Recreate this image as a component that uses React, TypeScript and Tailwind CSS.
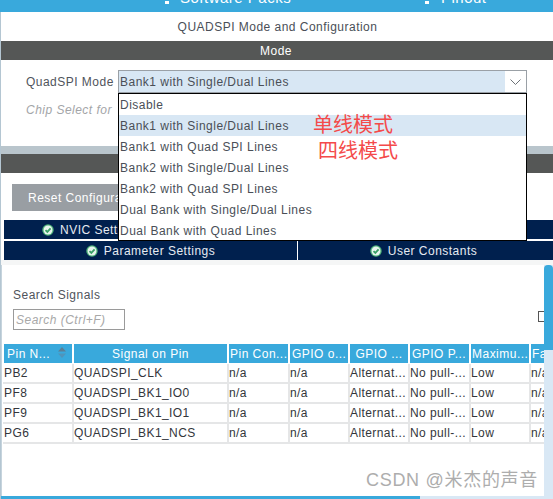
import React from "react";

const Check = () => (
  <svg width="12" height="12" viewBox="0 0 13 13" className="shrink-0">
    <circle cx="6.5" cy="6.5" r="6.2" fill="#4fb37a" />
    <circle cx="6.5" cy="6.5" r="4.8" fill="#e8f5ee" />
    <path d="M3.8 6.6 L5.8 8.6 L9.3 4.8" fill="none" stroke="#3aa066" strokeWidth="2" />
  </svg>
);

const columns = [
  { w: "w-[68px]", label: "Pin N...", align: "pl-[3px]", sort: true },
  { w: "w-[153px]", label: "Signal on Pin", align: "justify-center" },
  { w: "w-[59px]", label: "Pin Con...", align: "pl-[1px]" },
  { w: "w-[58px]", label: "GPIO o...", align: "pl-[2px]" },
  { w: "w-[58px]", label: "GPIO ...", align: "justify-center" },
  { w: "w-[59px]", label: "GPIO P...", align: "pl-[2px]" },
  { w: "w-[58px]", label: "Maximu...", align: "pl-[1px]" },
  { w: "w-[20px]", label: "Fa", align: "pl-[1px]" },
];

const rows = [
  ["PB2", "QUADSPI_CLK"],
  ["PF8", "QUADSPI_BK1_IO0"],
  ["PF9", "QUADSPI_BK1_IO1"],
  ["PG6", "QUADSPI_BK1_NCS"],
];

const options = [
  "Disable",
  "Bank1 with Single/Dual Lines",
  "Bank1 with Quad SPI Lines",
  "Bank2 with Single/Dual Lines",
  "Bank2 with Quad SPI Lines",
  "Dual Bank with Single/Dual Lines",
  "Dual Bank with Quad Lines",
];

export default function App() {
  return (
    <div className="relative w-[553px] h-[499px] overflow-hidden bg-white font-['Liberation_Sans',Arial,sans-serif] text-[12px] tracking-[0.48px] text-[#4a4f57]">
      {/* top bar */}
      <div className="h-[12px] bg-[#39a9dc] relative overflow-hidden text-white text-[15px] tracking-[0.5px]">
        <span className="absolute left-[180px] top-[-13px] whitespace-nowrap">Software Packs</span>
        <span className="absolute left-[165px] top-[1px] w-[4px] h-[3px] bg-white" />
        <span className="absolute left-[441px] top-[-13px] whitespace-nowrap">Pinout</span>
        <span className="absolute left-[425px] top-[1px] w-[4px] h-[3px] bg-white" />
      </div>

      <div className="border-l border-[#b4c6d2] h-[487px] flex flex-col">
        <div className="h-[29px] flex items-center justify-center pt-[1px] pl-[1px] shrink-0">QUADSPI Mode and Configuration</div>
        <div className="h-[19px] bg-[#555756] text-white flex items-center justify-center pr-[2px] shrink-0">Mode</div>

        <div className="h-[10px] shrink-0" />
        <div className="flex items-center h-[23px] shrink-0">
          <div className="w-[117px] pl-[25px] whitespace-nowrap text-[#50545c]">QuadSPI Mode</div>
          <div className="w-[409px] h-[23px] border border-[#9aa0a6] bg-[#d8e7f4] flex items-center justify-between">
            <span className="pl-[1px]">Bank1 with Single/Dual Lines</span>
            <span className="w-[21px] h-full bg-white flex items-center justify-center">
              <svg width="11" height="6" viewBox="0 0 11 6">
                <path d="M0.5 0.5 L5.5 5.5 L10.5 0.5" fill="none" stroke="#6d7277" strokeWidth="1" />
              </svg>
            </span>
          </div>
        </div>
        <div className="h-[16px] mt-[8px] pl-[25px] italic text-[#a3a5a8] whitespace-nowrap shrink-0">Chip Select for</div>

        <div className="h-[8px] mt-[29px] bg-[#b9c5cc] shrink-0" />
        <div className="h-[19px] bg-[#555756] shrink-0" />

        <div className="mt-[11px] ml-[11px] w-[160px] h-[27px] bg-[#999ea3] text-white flex items-center pl-[16px] whitespace-nowrap shrink-0">
          Reset Configuration
        </div>

        <div className="mt-[9px] ml-[3px] h-[19px] bg-[#00204e] text-[#e6ebf2] flex items-center shrink-0">
          <div className="pl-[38px] flex items-center gap-[6px]">
            <Check />
            <span>NVIC Settings</span>
          </div>
        </div>
        <div className="mt-[2px] ml-[3px] h-[19px] bg-[#00204e] text-[#e6ebf2] flex shrink-0">
          <div className="w-[294px] flex items-center justify-center gap-[6px] border-r border-white">
            <Check />
            <span>Parameter Settings</span>
          </div>
          <div className="flex-1 flex items-center justify-center gap-[6px] pr-[4px]">
            <Check />
            <span>User Constants</span>
          </div>
        </div>

        <div className="h-[5px] bg-[#f5f6f6] shrink-0" />

        <div className="flex flex-1 min-h-0">
          <div className="flex-1 min-w-0 flex flex-col overflow-hidden relative border-l border-[#c6d4dd]">
            <div className="h-[14px] mt-[23px] pl-[11px] text-[#50545c] leading-[14px] shrink-0">Search Signals</div>
            <div className="mt-[7px] ml-[11px] w-[112px] h-[21px] border border-[#9a9a9a] italic text-[#a8a8a8] flex items-center pl-[2px] shrink-0">
              Search (Ctrl+F)
            </div>
            <div className="absolute left-[536px] top-[46px] w-[6px] h-[11px] border border-r-0 border-[#555]" />

            <div className="mt-[14px] ml-[2px] flex gap-[2px] h-[19px] shrink-0 w-[560px]">
              {columns.map((c) => (
                <div key={c.label} className={`${c.w} ${c.align} bg-[#39a9dc] text-white flex items-center whitespace-nowrap relative shrink-0`}>
                  {c.label}
                  {c.sort && (
                    <svg width="8" height="11" viewBox="0 0 8 11" className="absolute right-[6px] top-[3px]">
                      <path d="M4 0 L8 4.5 H0 Z" fill="#5a7f96" />
                      <path d="M4 11 L8 6.5 H0 Z" fill="#4f95bb" />
                    </svg>
                  )}
                </div>
              ))}
            </div>
            <div className="h-[1px] shrink-0" />
            {rows.map((r) => (
              <div key={r[0]} className="flex h-[20px] ml-[1px] border-b-[2px] border-[#e5e6e7] text-[#33363b] shrink-0 w-[560px] tracking-[0.42px]">
                <div className="w-[71px] pl-[1px] flex items-center border-r-[2px] border-[#e5e6e7]">{r[0]}</div>
                <div className="w-[155px] flex items-center border-r-[2px] border-[#e5e6e7]">{r[1]}</div>
                <div className="w-[61px] flex items-center border-r-[2px] border-[#e5e6e7]">n/a</div>
                <div className="w-[60px] flex items-center border-r-[2px] border-[#e5e6e7]">n/a</div>
                <div className="w-[60px] flex items-center border-r-[2px] border-[#e5e6e7] whitespace-nowrap">Alternat...</div>
                <div className="w-[61px] flex items-center border-r-[2px] border-[#e5e6e7] whitespace-nowrap">No pull-...</div>
                <div className="w-[60px] flex items-center border-r-[2px] border-[#e5e6e7]">Low</div>
                <div className="w-[20px] flex items-center">n/a</div>
              </div>
            ))}
          </div>
          <div className="w-[9px] bg-[#d9e8f5] shrink-0">
            <div className="h-[85px] bg-[#39a9dc] rounded-t-[4px]" />
          </div>
        </div>
        <div className="h-[3px] flex shrink-0">
          <div className="w-[419px] bg-[#39a9dc]" />
          <div className="flex-1 bg-[#d9e8f5]" />
        </div>
      </div>

      {/* open dropdown */}
      <div className="absolute left-[118px] top-[93px] w-[409px] h-[148px] overflow-hidden bg-white border border-black flex flex-col">
        {options.map((o, i) => (
          <div key={o} className={`h-[21px] shrink-0 flex items-center pl-[1px] whitespace-nowrap ${i === 1 ? "bg-[#d8e7f4]" : ""}`}>
            {o}
          </div>
        ))}
      </div>

      {/* annotations */}
      <span className="absolute left-[313px] top-[110px] text-[20px] leading-[28px] tracking-normal text-[#f44a4a] font-['Noto_Sans_CJK_SC',sans-serif] whitespace-nowrap">单线模式</span>
      <span className="absolute left-[318px] top-[136px] text-[20px] leading-[28px] tracking-normal text-[#f44a4a] font-['Noto_Sans_CJK_SC',sans-serif] whitespace-nowrap">四线模式</span>

      {/* watermark */}
      <span className="absolute left-[366px] top-[468px] text-[18px] leading-[24px] tracking-[0.7px] text-[#adadad] font-['Liberation_Sans','Noto_Sans_CJK_SC',sans-serif] whitespace-nowrap">CSDN @米杰的声音</span>
    </div>
  );
}
